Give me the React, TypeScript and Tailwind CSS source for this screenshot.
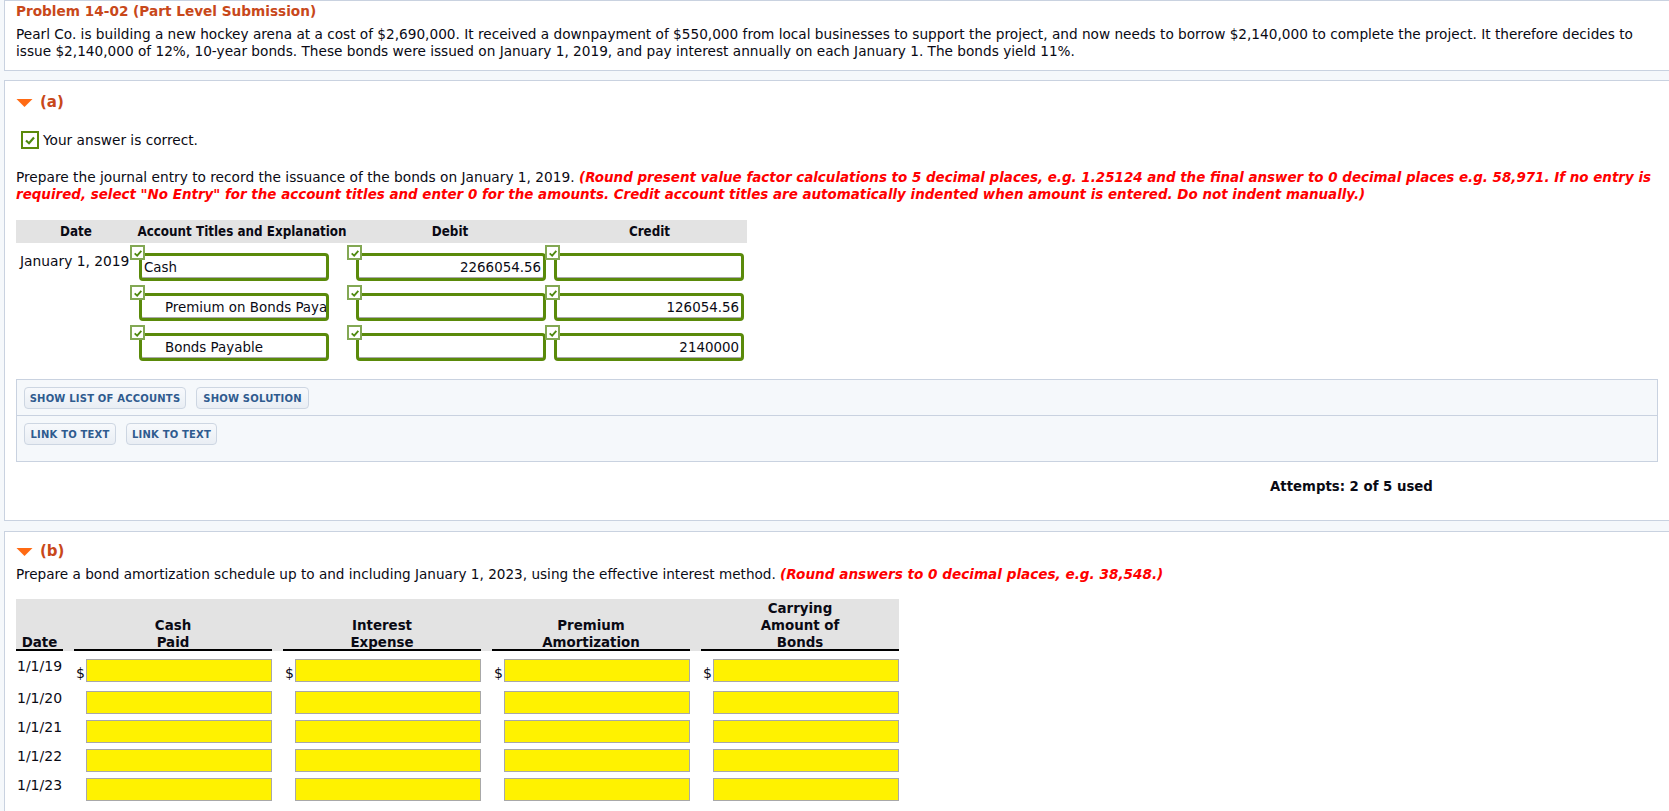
const font = "font-['Verdana','DejaVu_Sans',sans-serif]";

function Tick({ className = "h-[10px] w-[10px]", width = "2.2" }: { className?: string; width?: string }) {
  return (
    <svg viewBox="0 0 12 12" className={className} fill="none" stroke="#4f8a10" strokeWidth={width}>
      <path d="M2 6.5 L5 9.2 L10 3.5" />
    </svg>
  );
}

function Check() {
  return (
    <span className="absolute -left-[9px] -top-[8px] flex h-[15px] w-[15px] items-center justify-center border-2 border-[#83a854] bg-white">
      <Tick />
    </span>
  );
}

function JInput({ text, w, align, indent, mr }: { text?: string; w: string; align?: string; indent?: boolean; mr: string }) {
  return (
    <div className={`relative h-[28px] ${w} ${mr} shrink-0`}>
      <Check />
      <div
        className={`flex h-full items-center overflow-hidden whitespace-nowrap rounded-[4px] border-[3px] border-[#5a8a0a] bg-white text-[13.4px] shadow-[inset_0_-1px_0_#aaaaaa] ${align === "right" ? "justify-end pr-[2px]" : "justify-start"} ${indent ? "pl-[23px]" : "pl-[2px]"}`}
      >
        {text}
      </div>
    </div>
  );
}

function JRow({ date, account, indent, debit, credit, mt }: { date?: string; account: string; indent?: boolean; debit?: string; credit?: string; mt: string }) {
  return (
    <div className={`flex ${mt}`}>
      <div className="w-[123px] shrink-0 pl-[4px] text-[13.8px] leading-[17px]">{date}</div>
      <JInput text={account} w="w-[190px]" indent={indent} mr="mr-[27px]" />
      <JInput text={debit} w="w-[190px]" align="right" mr="mr-[8px]" />
      <JInput text={credit} w="w-[190px]" align="right" mr="" />
    </div>
  );
}

function Btn({ children, w }: { children: string; w: string }) {
  return (
    <div className={`flex h-[22px] ${w} items-center justify-center rounded-[4px] border border-[#cdd6e2] bg-gradient-to-b from-[#f7f9fc] to-[#e9eef4] text-[10px] font-bold tracking-[0.2px] text-[#2f5b8f]`}>
      {children}
    </div>
  );
}

function Triangle() {
  return (
    <svg viewBox="0 0 16 8" className="h-[8px] w-[17px]">
      <path d="M0 0 H16 L8 8 Z" fill="#ff6a13" />
    </svg>
  );
}

function Head({ label }: { label: string }) {
  return (
    <div className="flex items-center">
      <Triangle />
      <span className="ml-[7px] text-[15px] font-bold leading-[17px] text-[#c8481a]">{label}</span>
    </div>
  );
}

const colsB = [
  ["Cash", "Paid"],
  ["Interest", "Expense"],
  ["Premium", "Amortization"],
  ["Carrying", "Amount of", "Bonds"],
];
const datesB = ["1/1/19", "1/1/20", "1/1/21", "1/1/22", "1/1/23"];

export default function App() {
  return (
    <div className={`${font} h-[811px] overflow-hidden bg-[#f5f8fb] pl-[4px] text-[13.6px] leading-[17px] text-[#0a0a14]`}>
      <section className="border-b border-l border-t border-[#c9d2e0] bg-white pb-[10px] pl-[11px] pt-[2px]">
        <h1 className="text-[13.65px] font-bold leading-[17px] text-[#c8481a]">Problem 14-02 (Part Level Submission)</h1>
        <p className="mt-[6px] w-[1630px] text-[13.67px]">
          Pearl Co. is building a new hockey arena at a cost of $2,690,000. It received a downpayment of $550,000 from local businesses to support the project, and now needs to borrow $2,140,000 to complete the project. It therefore decides to issue $2,140,000 of 12%, 10-year bonds. These bonds were issued on January 1, 2019, and pay interest annually on each January 1. The bonds yield 11%.
        </p>
      </section>

      <section className="mt-[9px] border-b border-l border-t border-[#c9d2e0] bg-white pb-[25px] pl-[11px] pt-[13px]">
        <Head label="(a)" />
        <div className="ml-[5px] mt-[20px] flex items-center">
          <span className="flex h-[18px] w-[18px] items-center justify-center border-2 border-[#5a8a0a] bg-white">
            <Tick className="h-[12px] w-[12px]" />
          </span>
          <span className="ml-[4px] text-[13.7px]">Your answer is correct.</span>
        </div>
        <p className="mt-[20px] w-[1640px] text-[13.73px]">
          Prepare the journal entry to record the issuance of the bonds on January 1, 2019.{" "}
          <b className="text-[13.45px] italic text-[#ff0000]">
            (Round present value factor calculations to 5 decimal places, e.g. 1.25124 and the final answer to 0 decimal places e.g. 58,971. If no entry is required, select "No Entry" for the account titles and enter 0 for the amounts. Credit account titles are automatically indented when amount is entered. Do not indent manually.)
          </b>
        </p>

        <div className="mt-[17px] flex h-[23px] w-[731px] items-center whitespace-nowrap bg-[#e3e3e3] font-['DejaVu_Sans_Condensed','DejaVu_Sans',sans-serif] text-[13.3px] font-bold">
          <div className="w-[120px] text-center">Date</div>
          <div className="w-[212px] text-center">Account Titles and Explanation</div>
          <div className="w-[204px] text-center">Debit</div>
          <div className="w-[195px] text-center">Credit</div>
        </div>
        <JRow date="January 1, 2019" account="Cash" debit="2266054.56" mt="mt-[10px]" />
        <JRow account="Premium on Bonds Payable" indent mt="mt-[12px]" credit="126054.56" />
        <JRow account="Bonds Payable" indent mt="mt-[12px]" credit="2140000" />

        <div className="mt-[18px] w-[1642px] border border-[#c9d2e0] bg-[#f5f8fb]">
          <div className="flex h-[36px] gap-[10px] border-b border-[#c9d2e0] pl-[7px] pt-[7px]">
            <Btn w="w-[162px]">SHOW LIST OF ACCOUNTS</Btn>
            <Btn w="w-[113px]">SHOW SOLUTION</Btn>
          </div>
          <div className="flex h-[45px] gap-[10px] pl-[7px] pt-[7px]">
            <Btn w="w-[92px]">LINK TO TEXT</Btn>
            <Btn w="w-[91px]">LINK TO TEXT</Btn>
          </div>
        </div>
        <div className="ml-[1254px] mt-[16px] text-[13.3px] font-bold">Attempts: 2 of 5 used</div>
      </section>

      <section className="mt-[10px] border-l border-t border-[#c9d2e0] bg-white pb-[20px] pl-[11px] pt-[11px]">
        <Head label="(b)" />
        <p className="mt-[6px] text-[13.6px]">
          Prepare a bond amortization schedule up to and including January 1, 2023, using the effective interest method.{" "}
          <b className="italic text-[#ff0000]">(Round answers to 0 decimal places, e.g. 38,548.)</b>
        </p>

        <div className="mt-[16px] flex h-[52px] w-[883px] items-end bg-[#e3e3e3] text-[13.4px] font-bold">
          <div className="w-[47px] border-b-2 border-black text-center">
            <div className="-mb-[2px]">Date</div>
          </div>
          {colsB.map((c) => (
            <div key={c[0]} className="ml-[11px] w-[198px] border-b-2 border-black text-center">
              <div className="-mb-[2px]">
                {c.map((l) => (
                  <div key={l}>{l}</div>
                ))}
              </div>
            </div>
          ))}
        </div>

        <div className="mt-[8px]">
          {datesB.map((d, i) => (
            <div key={d} className={`flex h-[23px] ${i === 0 ? "" : i === 1 ? "mt-[9px]" : "mt-[6px]"}`}>
              <div className="-mt-[1px] w-[47px] pl-[1px] text-[14px] leading-[17px]">{d}</div>
              {colsB.map((c) => (
                <div key={c[0]} className="ml-[11px] flex w-[198px] items-end">
                  <span className="w-[12px] pl-[2px] text-[14px] leading-[17px]">{i === 0 ? "$" : ""}</span>
                  <div className="h-full w-[186px] border border-[#a8a8a8] bg-[#fff200]" />
                </div>
              ))}
            </div>
          ))}
        </div>
      </section>
    </div>
  );
}
